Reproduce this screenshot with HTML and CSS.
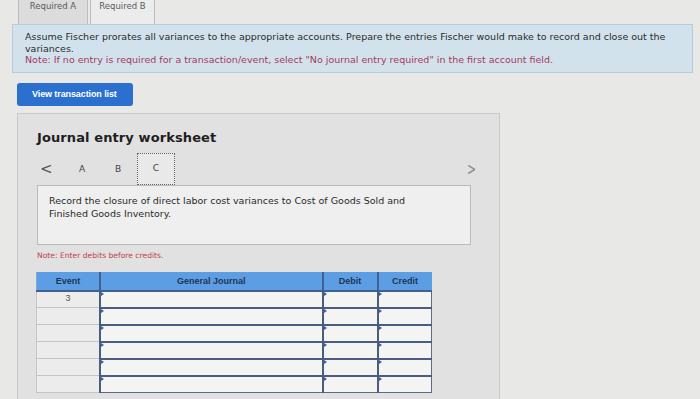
FILE: index.html
```html
<!DOCTYPE html>
<html lang="en">
<head>
    <meta charset="UTF-8">
    <title>Journal entry worksheet</title>
    <link rel="stylesheet" href="styles.css">
</head>
<body>
    <div class="tabs">
        <div class="tab">Required A</div>
        <div class="tab active">Required B</div>
    </div>

    <!-- Instrucoes da questao -->
    <div class="prompt">
        <p>Assume Fischer prorates all variances to the appropriate accounts. Prepare the entries Fischer would make to record and close out the variances.</p>
        <p class="note">Note: If no entry is required for a transaction/event, select "No journal entry required" in the first account field.</p>
    </div>

    <button class="btn-list">View transaction list</button>

    <div class="worksheet">
        <h2>Journal entry worksheet</h2>

        <div class="steps">
            <span class="arrow">&lt;</span>
            <span class="step">A</span>
            <span class="step">B</span>
            <span class="step current">C</span>
            <span class="arrow next">&gt;</span>
        </div>

        <div class="desc">
            <p>Record the closure of direct labor cost variances to Cost of Goods Sold and Finished Goods Inventory.</p>
        </div>

        <p class="small-note">Note: Enter debits before credits.</p>

        <table class="journal">
            <thead>
                <tr>
                    <th class="c-event">Event</th>
                    <th class="c-acct">General Journal</th>
                    <th class="c-amt">Debit</th>
                    <th class="c-amt">Credit</th>
                </tr>
            </thead>
            <tbody>
                <tr><td class="ev">3</td><td class="in"></td><td class="in"></td><td class="in"></td></tr>
                <tr><td class="ev"></td><td class="in"></td><td class="in"></td><td class="in"></td></tr>
                <tr><td class="ev"></td><td class="in"></td><td class="in"></td><td class="in"></td></tr>
                <tr><td class="ev"></td><td class="in"></td><td class="in"></td><td class="in"></td></tr>
                <tr><td class="ev"></td><td class="in"></td><td class="in"></td><td class="in"></td></tr>
                <tr><td class="ev"></td><td class="in"></td><td class="in"></td><td class="in"></td></tr>
            </tbody>
        </table>
    </div>
</body>
</html>
```

FILE: styles.css
```css
html, body {
    margin: 0;
    height: 100%;
    overflow: hidden;
}
body {
    font-family: "DejaVu Sans", Verdana, sans-serif;
    background: #e8e8e6;
    color: #2a2a2a;
}
.tabs {
    display: flex;
    gap: 2px;
    padding-left: 18px;
    height: 24px;
}
.tab {
    width: 70px;
    height: 24px;
    box-sizing: border-box;
    padding-top: 1px;
    text-align: center;
    font-size: 8.5px;
    line-height: 10px;
    color: #5a5a5a;
    background: #dcdcdc;
    border: 1px solid #bdbdbd;
    border-top: none;
    border-bottom: none;
}
.tab.active {
    width: 65px;
    background: #ececec;
}
.prompt {
    margin: 0 7px 0 12px;
    padding: 6px 10px 6px 12px;
    background: #d2e2ec;
    border: 1px solid #b8cbd8;
    font-size: 9.5px;
    line-height: 11.5px;
}
.prompt p {
    margin: 0;
}
.prompt .note {
    color: #a8385a;
}
.btn-list {
    display: block;
    margin: 10px 0 0 17px;
    width: 116px;
    height: 23px;
    padding: 0 0 0 15px;
    text-align: left;
    background: #2b6fcf;
    color: white;
    border: none;
    border-radius: 3px;
    font-family: "Liberation Sans", Arial, sans-serif;
    font-weight: bold;
    font-size: 9px;
    letter-spacing: -0.1px;
}
.worksheet {
    margin: 7px 0 0 17px;
    width: 483px;
    height: 287px;
    box-sizing: border-box;
    padding: 15px 28px 0 19px;
    background: #e1e1e1;
    border: 1px solid #c9c9c9;
    border-bottom: none;
}
.worksheet h2 {
    margin: 0;
    font-size: 13px;
    line-height: 18px;
    letter-spacing: 0.1px;
    color: #1e1e1e;
}
.steps {
    display: flex;
    align-items: center;
    height: 32px;
    margin-top: 6px;
    font-size: 9px;
    color: #444;
}
.steps .arrow {
    font-size: 15px;
    color: #555;
    margin-left: 3px;
    width: 39px;
}
.steps .step {
    width: 36px;
    text-align: left;
}
.steps .current {
    width: 38px;
    height: 32px;
    box-sizing: border-box;
    border: 1px dotted #666;
    text-align: center;
    line-height: 28px;
    margin-left: -14px;
    background: #e9e9e9;
}
.steps .next {
    margin-left: auto;
    width: auto;
    font-size: 18px;
    color: #8a8a8a;
    margin-right: -8px;
    transform: scaleX(0.6);
}
.desc {
    height: 60px;
    box-sizing: border-box;
    padding: 8px 11px;
    background: #efefef;
    border: 1px solid #bababa;
    font-size: 9.5px;
    line-height: 13px;
}
.desc p {
    margin: 0;
    width: 380px;
}
.small-note {
    margin: 6px 0 0 0;
    font-size: 7.6px;
    color: #c0444a;
}
.journal {
    margin: 12px 0 0 -1px;
    border-collapse: collapse;
    width: 396px;
    font-size: 9px;
}
.journal th {
    height: 18px;
    padding: 0;
    background: #5d9de3;
    color: #1d3656;
    font-family: "Liberation Sans", Arial, sans-serif;
    font-weight: bold;
    border-left: 2px solid #40618f;
    border-bottom: 2px solid #40618f;
}
.journal th.c-event {
    border-left: 1px solid #7fa9d8;
    width: 62px;
}
.journal th.c-amt {
    width: 53px;
}
.journal td {
    height: 15px;
    padding: 0;
}
.journal td.ev {
    background: #ececec;
    border: 1px solid #c4c4c4;
    border-top: none;
    text-align: center;
    color: #555;
    vertical-align: top;
    font-family: "Liberation Sans", Arial, sans-serif;
    line-height: 12px;
}
.journal td.in {
    position: relative;
    background: #f4f4f3;
    border-left: 2px solid #4a5d7e;
    border-top: 2px solid #4a5d7e;
    border-right: 1px solid #5a6c8a;
    border-bottom: 1px solid #5a6c8a;
}
.journal td.in::before {
    content: "";
    position: absolute;
    left: 0;
    top: 0;
    border-left: 3px solid #3a5fa8;
    border-top: 2px solid transparent;
    border-bottom: 2px solid transparent;
}
```
